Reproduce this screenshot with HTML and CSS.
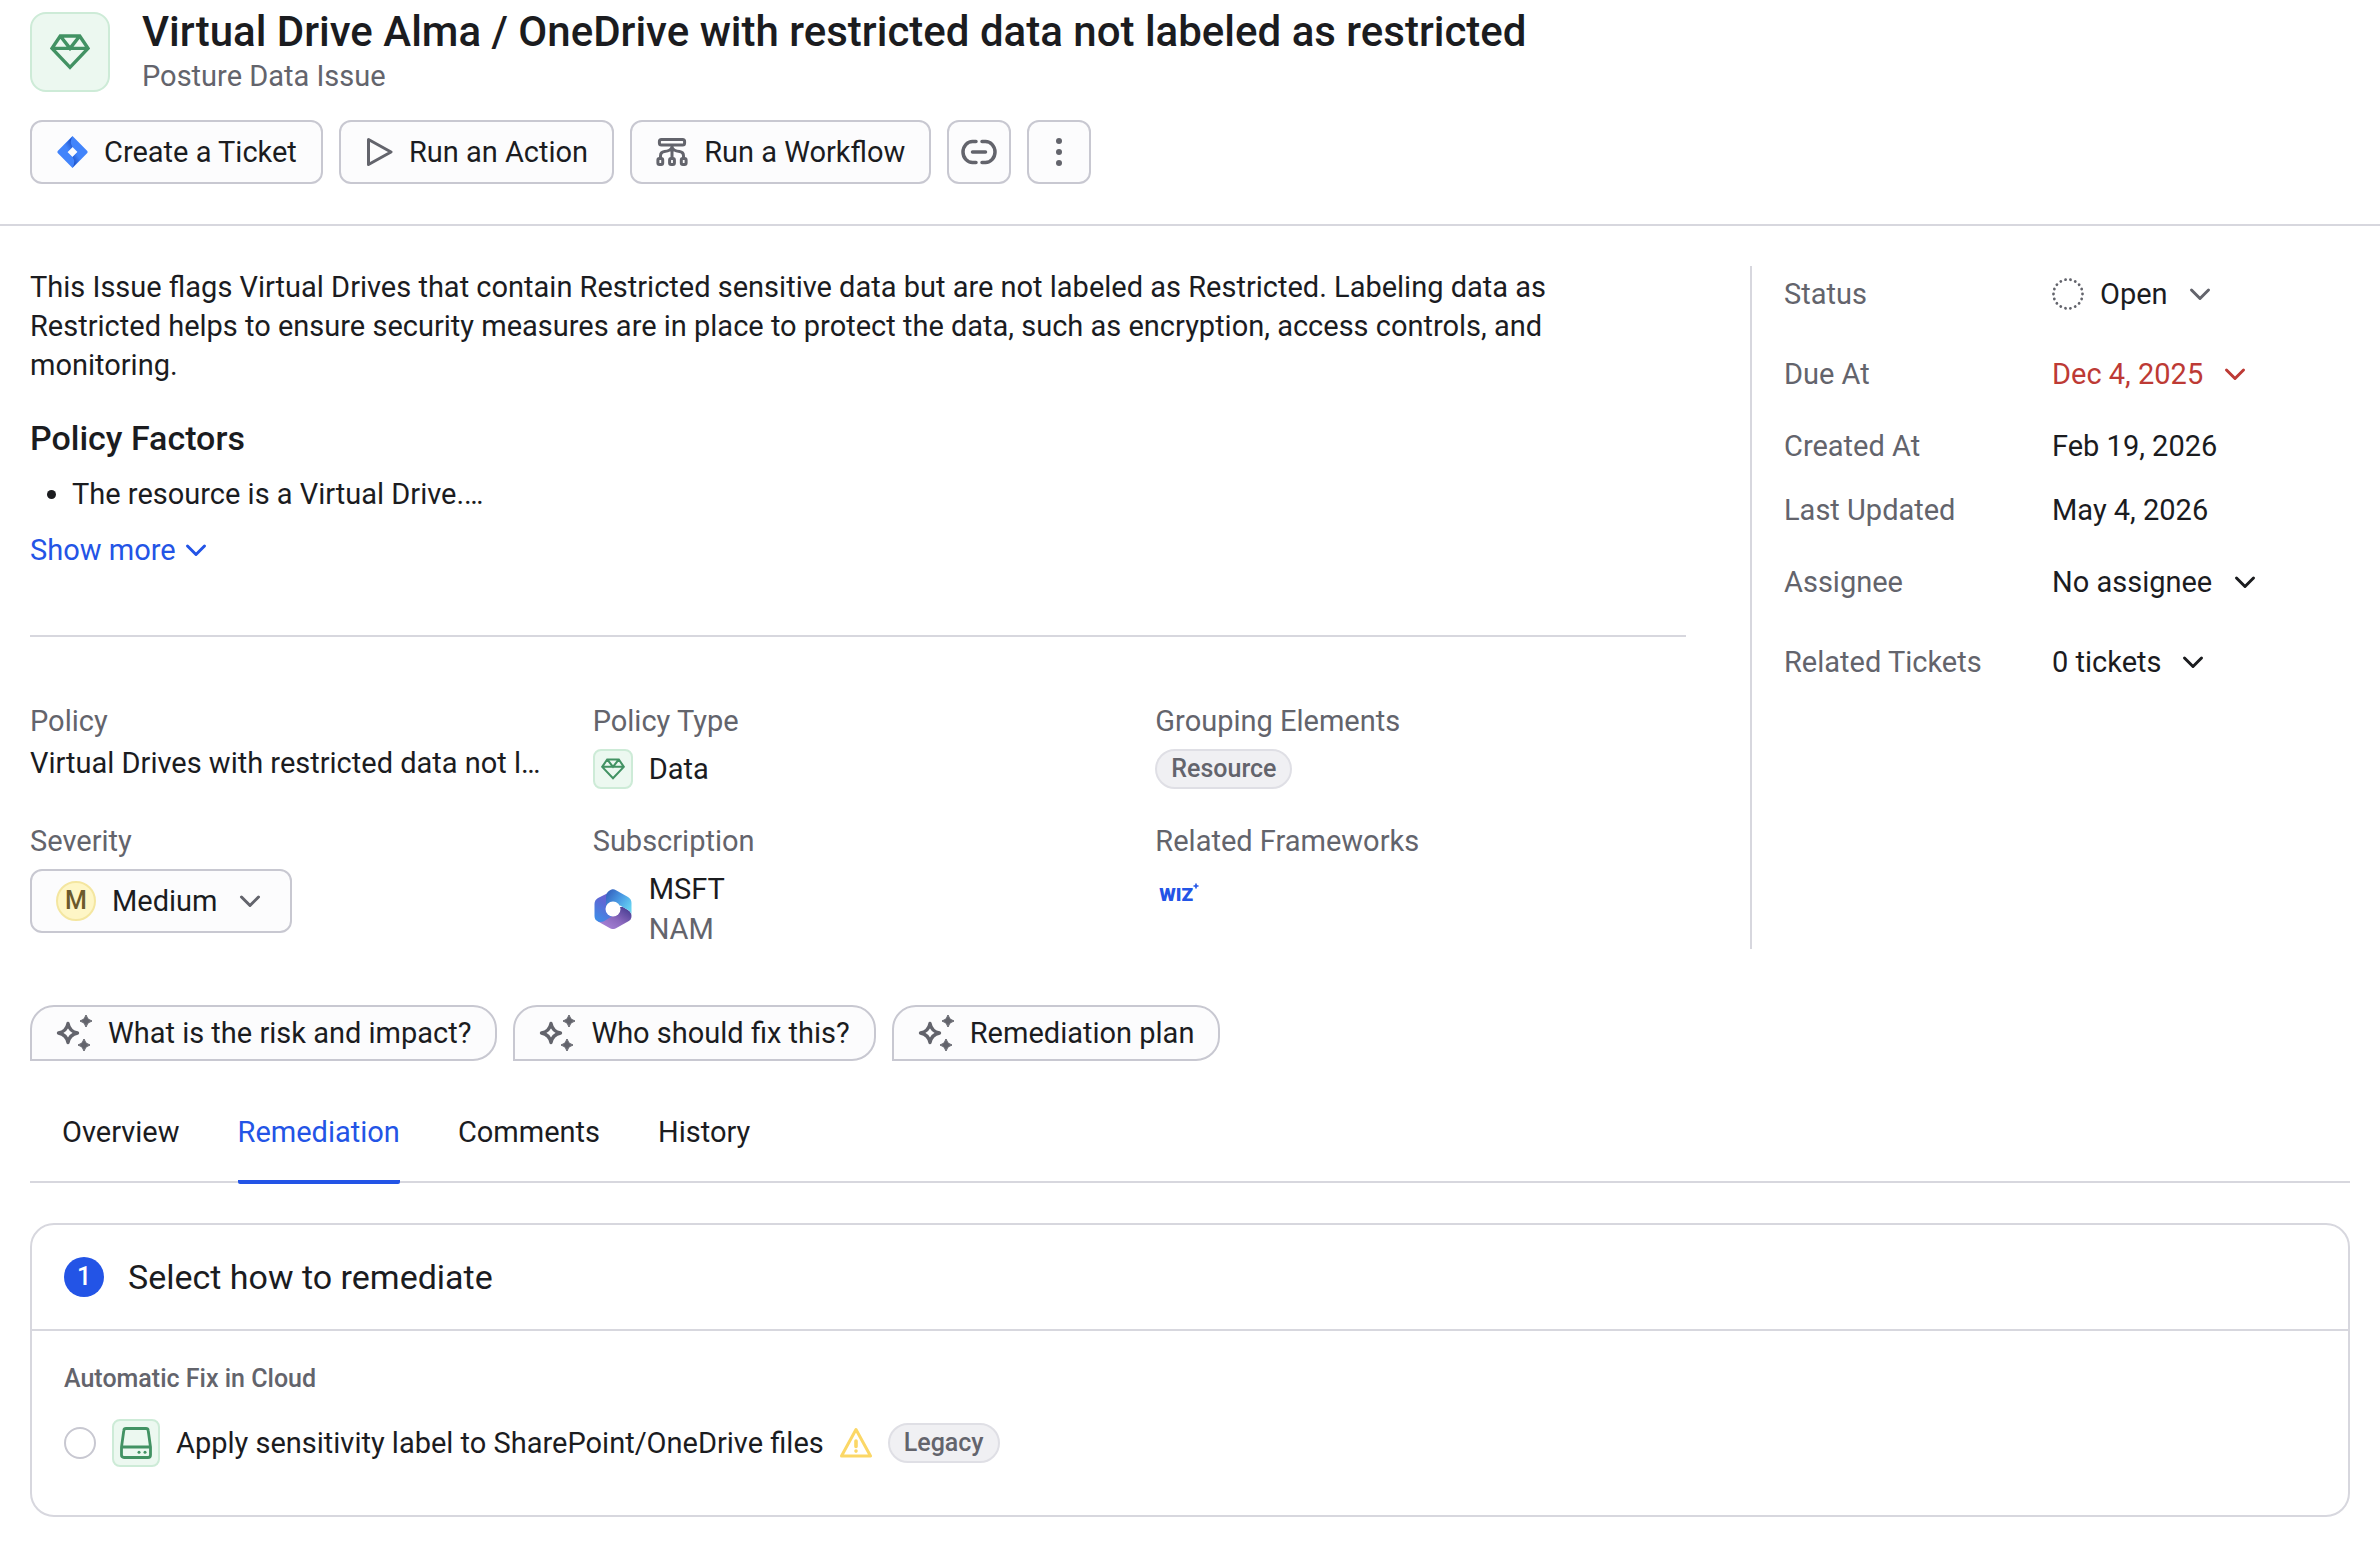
FILE: index.html
```html
<!DOCTYPE html>
<html lang="en">
<head>
<meta charset="utf-8">
<meta name="viewport" content="width=device-width, initial-scale=1">
<title>Virtual Drive Alma / OneDrive with restricted data not labeled as restricted</title>
<link rel="stylesheet" href="styles.css">
</head>
<body>
<svg class="sprite" aria-hidden="true">
  <symbol id="gem" viewBox="0 0 40 36">
    <path d="M10.3 2H29.7L38 14.4L20 33.4L2 14.4ZM2 14.4H38M10.3 2L20 14.4L29.7 2" fill="none" stroke="currentColor" stroke-width="3.4"/>
  </symbol>
  <symbol id="chevron" viewBox="0 0 32 32">
    <path d="M7.5 12L16 20.5L24.5 12" fill="none" stroke="currentColor" stroke-width="3" stroke-linecap="round" stroke-linejoin="round"/>
  </symbol>
  <symbol id="sparkle" viewBox="0 0 36 36">
    <path d="M12 8.5Q13.5 16.5 21.5 18Q13.5 19.5 12 27.5Q10.5 19.5 2.5 18Q10.5 16.5 12 8.5Z" fill="none" stroke="currentColor" stroke-width="3.4" stroke-linejoin="round"/>
    <path d="M30 0Q31 5 36 6Q31 7 30 12Q29 7 24 6Q29 5 30 0ZM28 24Q29 29 34 30Q29 31 28 36Q27 31 22 30Q27 29 28 24Z" fill="currentColor" stroke="currentColor" stroke-width="1"/>
  </symbol>
</svg>

<header class="header">
  <div class="heading">
    <span class="tile tile-large"><svg width="40" height="36" aria-hidden="true"><use href="#gem"/></svg></span>
    <div class="heading-text">
      <h1 class="title">Virtual Drive Alma / OneDrive with restricted data not labeled as restricted</h1>
      <p class="subtitle">Posture Data Issue</p>
    </div>
  </div>
  <div class="actions">
    <button type="button" class="button">
      <svg width="32" height="32" viewBox="0 0 32 32" aria-hidden="true">
        <defs>
          <linearGradient id="jira-a" x1="1" y1="0" x2="0.2" y2="1"><stop offset="0.2" stop-color="#1d4fc4"/><stop offset="0.8" stop-color="#4284fb"/></linearGradient>
          <linearGradient id="jira-b" x1="0" y1="1" x2="0.8" y2="0"><stop offset="0.2" stop-color="#1d4fc4"/><stop offset="0.8" stop-color="#4284fb"/></linearGradient>
        </defs>
        <path d="M16.5 0L31.3 15Q32 16 31.3 17L16.5 32L1.7 17Q1 16 1.7 15ZM16.5 11L11.5 16L16.5 21L21.5 16Z" fill="#4284fb" fill-rule="evenodd"/>
        <path d="M16.5 0.5Q13 6 16.5 11L11.5 16L8.5 9Z" fill="url(#jira-a)"/>
        <path d="M16.5 31.5Q20 26 16.5 21L21.5 16L24.5 23Z" fill="url(#jira-b)"/>
      </svg>
      Create a Ticket
    </button>
    <button type="button" class="button">
      <svg class="muted" width="28" height="32" viewBox="0 0 28 32" aria-hidden="true"><path d="M3.5 3.5L26 16L3.5 28.5Z" fill="none" stroke="currentColor" stroke-width="3" stroke-linejoin="round"/></svg>
      Run an Action
    </button>
    <button type="button" class="button">
      <svg class="muted" width="32" height="32" viewBox="0 0 32 32" aria-hidden="true" fill="none" stroke="currentColor" stroke-width="3">
        <rect x="3.4" y="3.4" width="25.2" height="5.6" rx="2"/>
        <path d="M16 9V22M4.5 22V20Q4.5 16 8.500 15.500Q15 15 16 11Q17 15 23.500 15.500Q27.500 16 27.500 20V22"/>
        <rect x="1.9" y="22.600" width="4.800" height="6" rx="1.500"/>
        <rect x="13.600" y="22.600" width="4.800" height="6" rx="1.500"/>
        <rect x="25.300" y="22.600" width="4.800" height="6" rx="1.500"/>
      </svg>
      Run a Workflow
    </button>
    <button type="button" class="button button-icon" aria-label="Copy link">
      <svg class="muted" width="36" height="36" viewBox="0 0 36 36" aria-hidden="true"><path d="M15 7.500H11.500A9.500 10.500 0 0 0 11.500 28.500H15M21 7.500H24.500A9.500 10.500 0 0 1 24.500 28.500H21M11.500 18H24.500" fill="none" stroke="currentColor" stroke-width="3.500" stroke-linecap="round"/></svg>
    </button>
    <button type="button" class="button button-icon" aria-label="More actions">
      <svg class="muted" width="32" height="32" viewBox="0 0 32 32" aria-hidden="true" fill="currentColor"><circle cx="16" cy="5" r="3"/><circle cx="16" cy="16" r="3"/><circle cx="16" cy="27" r="3"/></svg>
    </button>
  </div>
</header>

<main class="content">
  <div class="columns">
    <div class="summary">
      <p class="description">This Issue flags Virtual Drives that contain Restricted sensitive data but are not labeled as Restricted. Labeling data as Restricted helps to ensure security measures are in place to protect the data, such as encryption, access controls, and monitoring.</p>
      <h2 class="factors-title">Policy Factors</h2>
      <ul class="factors"><li>The resource is a Virtual Drive.…</li></ul>
      <button type="button" class="link-button">Show more<svg width="32" height="32" aria-hidden="true"><use href="#chevron"/></svg></button>
      <hr class="divider">
      <dl class="facts">
        <div class="fact">
          <dt>Policy</dt>
          <dd class="policy-name">Virtual Drives with restricted data not l…</dd>
        </div>
        <div class="fact">
          <dt>Policy Type</dt>
          <dd class="with-icon"><span class="tile tile-small"><svg width="24" height="22" aria-hidden="true"><use href="#gem"/></svg></span>Data</dd>
        </div>
        <div class="fact">
          <dt>Grouping Elements</dt>
          <dd class="with-icon"><span class="pill">Resource</span></dd>
        </div>
        <div class="fact">
          <dt><label for="severity">Severity</label></dt>
          <dd>
            <span class="button severity">
              <span class="severity-mark">M</span>
              <select id="severity" class="select"><option>Medium</option></select>
              <svg class="muted" width="32" height="32" aria-hidden="true"><use href="#chevron"/></svg>
            </span>
          </dd>
        </div>
        <div class="fact">
          <dt>Subscription</dt>
          <dd class="with-icon">
            <svg width="40" height="40" viewBox="0 0 40 40" aria-hidden="true">
              <defs>
                <linearGradient id="ms-a" x1="0.7" y1="0" x2="0.3" y2="1"><stop offset="0" stop-color="#7a5ccc"/><stop offset="0.45" stop-color="#5a6ad6"/><stop offset="1" stop-color="#3f8be6"/></linearGradient>
                <linearGradient id="ms-b" x1="0" y1="0" x2="1" y2="0.7"><stop offset="0" stop-color="#3058b8"/><stop offset="0.55" stop-color="#4a9be4"/><stop offset="1" stop-color="#67d3f2"/></linearGradient>
                <linearGradient id="ms-c" x1="1" y1="0" x2="0" y2="1"><stop offset="0.1" stop-color="#4b3f94"/><stop offset="0.5" stop-color="#8a68bd"/><stop offset="1" stop-color="#b08add"/></linearGradient>
              </defs>
              <path d="M12 18H30L35 21Q38.500 23.500 38.500 27Q38.500 30.500 35 32.500L23 39.300Q20 40.800 17 39.300L5 32.500Z" fill="url(#ms-c)"/>
              <path d="M20 0.500L14 4.500L5 9Q1.500 11 1.500 15V27Q1.500 31 5 32.500Q9 34 13 31L21 26V8Z" fill="url(#ms-a)"/>
              <path d="M13 17V8Q13 3.500 17 1.200Q20 -0.500 23 1.200L35 8Q38.500 10 38.500 14V25Q37.500 22.500 35 21L27 16.500L20 20Z" fill="url(#ms-b)"/>
              <circle cx="20" cy="20" r="7.500" fill="#fff"/>
            </svg>
            <span class="stack"><span>MSFT</span><span class="muted">NAM</span></span>
          </dd>
        </div>
        <div class="fact">
          <dt>Related Frameworks</dt>
          <dd class="framework">WIZ<svg width="6" height="6" viewBox="0 0 6 6" aria-hidden="true"><path d="M3 0.500V5.500M0.500 3H5.500" stroke="currentColor" stroke-width="1.600"/></svg></dd>
        </div>
      </dl>
    </div>

    <aside class="details">
      <div class="detail detail-tall">
        <label for="status">Status</label>
        <span class="value">
          <svg class="muted" width="32" height="32" viewBox="0 0 32 32" aria-hidden="true"><circle cx="16" cy="16" r="14.500" fill="none" stroke="currentColor" stroke-width="2.800" stroke-linecap="round" pathLength="180" stroke-dasharray="0.100 9.900"/></svg>
          <select id="status" class="select"><option>Open</option></select>
          <svg class="muted" width="32" height="32" aria-hidden="true"><use href="#chevron"/></svg>
        </span>
      </div>
      <div class="detail detail-tall">
        <span>Due At</span>
        <button type="button" class="value overdue">Dec 4, 2025<svg width="32" height="32" aria-hidden="true"><use href="#chevron"/></svg></button>
      </div>
      <div class="detail"><span>Created At</span><span class="value">Feb 19, 2026</span></div>
      <div class="detail"><span>Last Updated</span><span class="value">May 4, 2026</span></div>
      <div class="detail detail-tall">
        <label for="assignee">Assignee</label>
        <span class="value">
          <select id="assignee" class="select"><option>No assignee</option></select>
          <svg width="32" height="32" aria-hidden="true"><use href="#chevron"/></svg>
        </span>
      </div>
      <div class="detail detail-tall">
        <span>Related Tickets</span>
        <button type="button" class="value">0 tickets<svg width="32" height="32" aria-hidden="true"><use href="#chevron"/></svg></button>
      </div>
    </aside>
  </div>

  <div class="prompts">
    <button type="button" class="prompt"><svg class="muted" width="36" height="36" aria-hidden="true"><use href="#sparkle"/></svg>What is the risk and impact?</button>
    <button type="button" class="prompt"><svg class="muted" width="36" height="36" aria-hidden="true"><use href="#sparkle"/></svg>Who should fix this?</button>
    <button type="button" class="prompt"><svg class="muted" width="36" height="36" aria-hidden="true"><use href="#sparkle"/></svg>Remediation plan</button>
  </div>

  <nav class="tabs">
    <a class="tab" href="#overview">Overview</a>
    <a class="tab tab-active" href="#remediation" aria-current="page">Remediation</a>
    <a class="tab" href="#comments">Comments</a>
    <a class="tab" href="#history">History</a>
  </nav>

  <section class="card" id="remediation">
    <div class="card-header">
      <span class="step">1</span>
      <h2 class="card-title">Select how to remediate</h2>
    </div>
    <div class="card-body">
      <h3 class="group-title">Automatic Fix in Cloud</h3>
      <div class="choice">
        <input type="radio" class="radio" id="apply-label" name="remediation">
        <label class="choice-label" for="apply-label">
          <span class="tile tile-medium">
            <svg width="32" height="32" viewBox="0 0 32 32" aria-hidden="true"><path d="M3.800 3.500Q4 1.500 6 1.500H26Q28 1.500 28.200 3.500L30.500 20V28Q30.500 30.500 28 30.500H4Q1.500 30.500 1.500 28V20ZM1.500 20H30.500" fill="none" stroke="currentColor" stroke-width="2.800"/><circle cx="19" cy="25.300" r="1.500" fill="currentColor"/><circle cx="25" cy="25.300" r="1.500" fill="currentColor"/></svg>
          </span>
          Apply sensitivity label to SharePoint/OneDrive files
        </label>
        <svg class="warning" width="32" height="32" viewBox="0 0 32 32" aria-hidden="true"><path d="M16 2.500L30.500 29H1.500Z" fill="none" stroke="currentColor" stroke-width="3" stroke-linejoin="round"/><path d="M16 14V19.500M16 24V24.100" stroke="currentColor" stroke-width="3.600" stroke-linecap="round"/></svg>
        <span class="pill">Legacy</span>
      </div>
    </div>
  </section>
</main>
</body>
</html>
```
FILE: styles.css
```css
:root {
  --text: #1b1c1f;
  --muted: #63646c;
  --line: #d7d7de;
  --control-line: #c8c8d1;
  --control-bg: #fcfcfd;
  --blue: #2354e6;
  --green: #429263;
}

* { box-sizing: border-box; }

body {
  margin: 0;
  background: #fff;
  color: var(--text);
  font: 29px/40px Roboto, sans-serif;
}

h1, h2, h3, p, ul, dl, dd { margin: 0; }

button, select {
  color: inherit;
  font: inherit;
}

svg { flex: none; display: block; }

.sprite { position: absolute; width: 0; height: 0; }
.muted { color: var(--muted); }

.header {
  display: flex;
  flex-direction: column;
  gap: 28px;
  padding: 12px 30px 40px;
  border-bottom: 2px solid var(--line);
}

.heading {
  display: flex;
  align-items: center;
  gap: 32px;
  height: 80px;
}

.heading-text { padding-top: 4px; }

.title {
  font-size: 42px;
  font-weight: 500;
  line-height: 44px;
}

.subtitle {
  color: var(--muted);
  line-height: 44px;
}

.tile {
  display: flex;
  flex: none;
  align-items: center;
  justify-content: center;
  border: 2px solid #cdebd7;
  background: #ecf8f0;
  color: var(--green);
}

.tile-large { width: 80px; height: 80px; border-radius: 16px; }
.tile-medium { width: 48px; height: 48px; border-radius: 8px; }
.tile-small { width: 40px; height: 40px; border-radius: 8px; }

.actions, .prompts {
  display: flex;
  flex-wrap: wrap;
  gap: 16px;
}

.button {
  display: inline-flex;
  align-items: center;
  gap: 16px;
  height: 64px;
  padding: 0 24px;
  border: 2px solid var(--control-line);
  border-radius: 12px;
  background: var(--control-bg);
}

.button-icon {
  justify-content: center;
  width: 64px;
  padding: 0;
}

.content { padding: 40px 30px 24px; }

.columns {
  display: grid;
  grid-template-columns: minmax(0, 1fr) 600px;
  gap: 64px;
}

.description {
  padding: 2px 64px 0 0;
  line-height: 39px;
}

.factors-title {
  margin-top: 33px;
  font-size: 34px;
  font-weight: 500;
}

.factors {
  margin-top: 16px;
  padding-left: 42px;
}

.link-button {
  display: flex;
  align-items: center;
  gap: 4px;
  margin-top: 16px;
  padding: 0;
  border: 0;
  background: none;
  color: var(--blue);
}

.divider {
  margin: 65px 0 64px;
  border: 0;
  border-top: 2px solid var(--line);
}

.facts {
  display: grid;
  grid-template-columns: repeat(3, minmax(0, 1fr));
  gap: 32px;
}

.fact dt {
  margin-bottom: 8px;
  color: var(--muted);
}

.fact dd { line-height: 40px; }

.fact .policy-name {
  line-height: 28px;
  white-space: nowrap;
}

.with-icon {
  display: flex;
  align-items: center;
  gap: 16px;
}

.stack {
  display: flex;
  flex-direction: column;
}

.pill {
  height: 40px;
  padding: 0 14px;
  border: 2px solid #dfdfe5;
  border-radius: 20px;
  background: #f0f0f3;
  color: var(--muted);
  font-size: 25px;
  font-weight: 500;
  line-height: 36px;
}

.severity-mark {
  width: 40px;
  height: 40px;
  border: 2px solid #f4e6a0;
  border-radius: 50%;
  background: #fef6c6;
  color: #6c5a2c;
  font-size: 25px;
  font-weight: 500;
  line-height: 36px;
  text-align: center;
}

.select {
  height: 40px;
  padding: 0;
  border: 0;
  background: none;
  appearance: none;
}

.fact .framework {
  display: flex;
  padding: 6px 4px 2px;
  color: var(--blue);
  font-size: 19px;
  font-weight: 900;
}

.framework svg { margin-top: 8px; }

.details {
  display: flex;
  flex-direction: column;
  gap: 24px;
  padding-left: 32px;
  border-left: 2px solid var(--line);
}

.detail {
  display: grid;
  grid-template-columns: 268px 1fr;
  align-items: center;
  min-height: 40px;
  color: var(--muted);
}

.detail-tall { min-height: 56px; }

.value {
  display: flex;
  align-items: center;
  justify-self: start;
  gap: 16px;
  padding: 0;
  border: 0;
  background: none;
  color: var(--text);
}

.value .muted { color: var(--muted); }
.overdue { color: #bd3a35; }

.prompts { margin-top: 56px; }

.prompt {
  display: flex;
  align-items: center;
  gap: 16px;
  height: 56px;
  padding: 0 24px;
  border: 2px solid var(--control-line);
  border-radius: 24px 24px 24px 0;
  background: var(--control-bg);
}

.tabs {
  display: flex;
  gap: 58px;
  margin-top: 40px;
  padding-left: 32px;
  border-bottom: 2px solid var(--line);
}

.tab {
  margin-bottom: -3px;
  padding: 11px 0 28px;
  border-bottom: 4px solid transparent;
  color: var(--text);
  text-decoration: none;
}

.tab-active {
  border-color: var(--blue);
  border-radius: 2px;
  color: var(--blue);
}

.card {
  margin-top: 40px;
  border: 2px solid var(--line);
  border-radius: 24px;
}

.card-header {
  display: flex;
  align-items: center;
  gap: 24px;
  height: 106px;
  padding: 0 32px;
  border-bottom: 2px solid var(--line);
}

.step {
  width: 40px;
  height: 40px;
  border-radius: 50%;
  background: var(--blue);
  color: #fff;
  font-size: 25px;
  font-weight: 500;
  text-align: center;
}

.card-title {
  font-size: 34px;
  font-weight: 400;
}

.card-body { padding: 32px 32px 48px; }

.group-title {
  margin-bottom: 24px;
  color: var(--muted);
  font-size: 25px;
  font-weight: 500;
  line-height: 32px;
}

.choice, .choice-label {
  display: flex;
  align-items: center;
  gap: 16px;
}

.radio {
  width: 32px;
  height: 32px;
  margin: 0;
  border: 2px solid var(--control-line);
  border-radius: 50%;
  background: #fff;
  appearance: none;
}

.radio:checked { border: 10px solid var(--blue); }
.warning { color: #fbd766; }
```
